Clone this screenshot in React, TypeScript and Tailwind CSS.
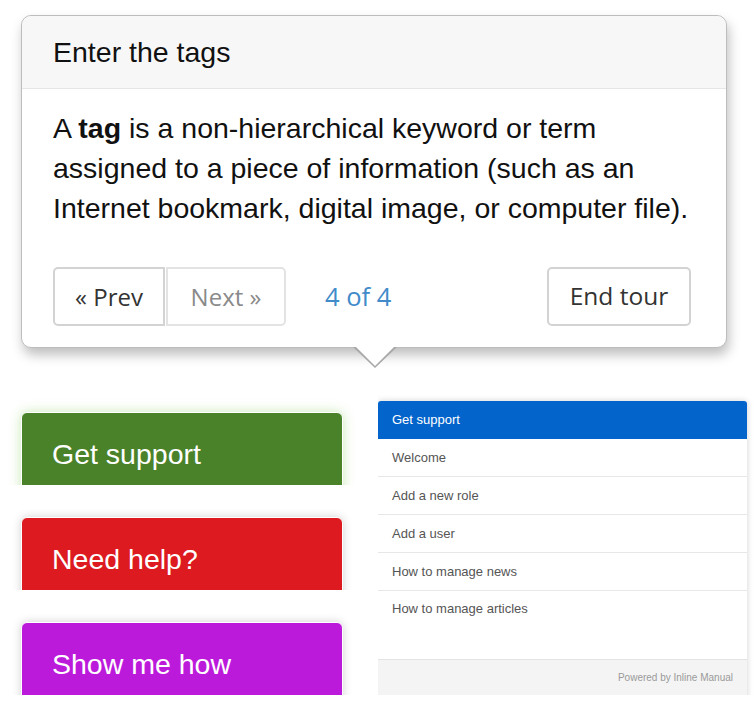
import React from "react";

const sans = { fontFamily: '"Liberation Sans", Arial, Helvetica, sans-serif' };
const open = { fontFamily: '"Open Sans", "Liberation Sans", sans-serif' };

function SideButton({ label, bg, glow }: { label: string; bg: string; glow: string }) {
  return (
    <div className="h-[105px] w-[358px] overflow-hidden pt-[32px]">
      <div
        className={`ml-[21px] flex h-[100px] w-[322px] items-start rounded-[6px] border border-white pl-[30px] pt-[22px] text-[28.5px] leading-[38px] text-white ${bg} ${glow}`}
        style={sans}
      >
        {label}
      </div>
    </div>
  );
}

export default function App() {
  const items = ["Welcome", "Add a new role", "Add a user", "How to manage news"];
  return (
    <div className="min-h-[719px] w-[753px] bg-white" style={sans}>
      {/* Tour popover */}
      <div className="h-[380px] pt-[15px]">
        <div className="relative ml-[21px] w-[706px] rounded-[10px] border border-[#bdbdbd] bg-white shadow-[2px_7px_12px_rgba(0,0,0,0.25)]">
          <div className="flex h-[73px] items-center rounded-t-[10px] border-b border-[#e6e6e6] bg-[#f7f7f7] pl-[31px] text-[28.5px] text-[#111]">
            Enter the tags
          </div>
          <div className="pl-[31px] pr-[35px] pt-[19px] pb-[21px]">
            <p className="text-[28.5px] leading-[40px] text-[#111]">
              A <b>tag</b> is a non-hierarchical keyword or term
              <br />
              assigned to a piece of information (such as an
              <br />
              Internet bookmark, digital image, or computer file).
            </p>
            <div className="mt-[39px] flex items-center justify-between" style={open}>
              <div className="flex items-center">
                <div className="flex h-[59px] w-[112px] items-center justify-center rounded-l-[5px] border-2 border-[#d3d3d3] text-[24px] text-[#333]">
                  « Prev
                </div>
                <div className="ml-[1px] flex h-[59px] w-[120px] items-center justify-center rounded-r-[5px] border-2 border-[#e3e3e3] text-[24px] text-[#8a8a8a]">
                  Next »
                </div>
                <div className="ml-[39px] text-[25.5px] text-[#428bca]">4 of 4</div>
              </div>
              <div className="flex h-[59px] w-[144px] items-center justify-center rounded-[5px] border-2 border-[#d3d3d3] text-[24.5px] text-[#333]">
                End tour
              </div>
            </div>
          </div>
          {/* arrow */}
          <div className="absolute left-[331px] top-full h-0 w-0 border-l-[22px] border-r-[22px] border-t-[21px] border-l-transparent border-r-transparent border-t-[#a8a8a8]" />
          <div className="absolute left-[333px] top-full -mt-[1px] h-0 w-0 border-l-[20px] border-r-[20px] border-t-[20px] border-l-transparent border-r-transparent border-t-white" />
        </div>
      </div>

      {/* Bottom samples */}
      <div className="flex">
        <div className="flex w-[358px] flex-col">
          <SideButton label="Get support" bg="bg-[#4a8229]" glow="shadow-[0_0_12px_rgba(120,200,70,0.4)]" />
          <SideButton label="Need help?" bg="bg-[#dc1a1f]" glow="shadow-[0_0_10px_rgba(0,0,0,0.18)]" />
          <SideButton label="Show me how" bg="bg-[#bc1adb]" glow="shadow-[0_0_10px_rgba(0,0,0,0.18)]" />
        </div>
        <div className="ml-[20px] h-[315px] w-[375px] overflow-hidden pt-[21px]">
          <div className="w-[369px] rounded-t-[3px] bg-white shadow-[0_0_6px_rgba(0,0,0,0.18)]">
            <div className="flex h-[38px] items-center rounded-t-[3px] bg-[#0364cb] pl-[14px] text-[13px] text-white">
              Get support
            </div>
            {items.map((t) => (
              <div
                key={t}
                className="flex h-[38px] items-center border-b border-[#e7e7e7] pl-[14px] text-[13px] text-[#555]"
              >
                {t}
              </div>
            ))}
            <div className="h-[68px] pl-[14px] pt-[9px] text-[13px] leading-[18px] text-[#555]">
              How to manage articles
            </div>
            <div className="flex h-[48px] items-start justify-end border-t border-[#e3e3e3] bg-[#f4f4f4] pr-[14px] pt-[11px] text-[10px] leading-[14px] text-[#9a9a9a]">
              Powered by Inline Manual
            </div>
          </div>
        </div>
      </div>
    </div>
  );
}
